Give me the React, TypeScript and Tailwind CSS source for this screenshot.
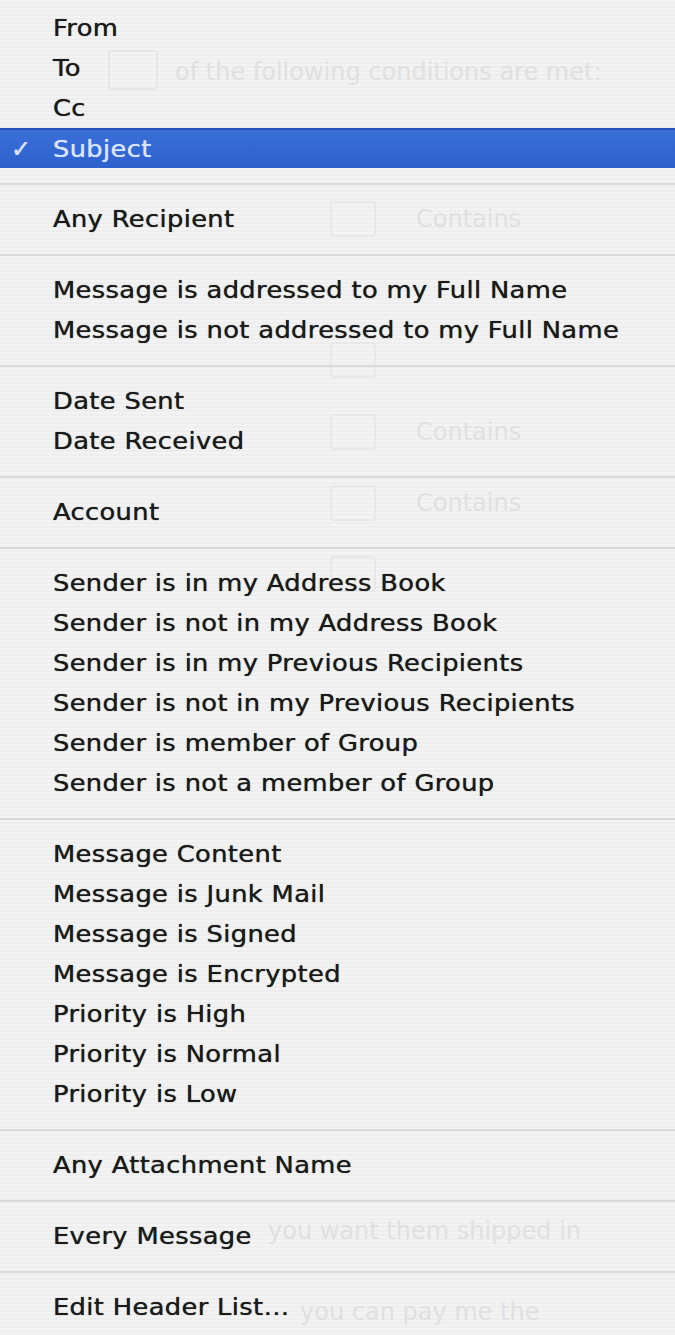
import React from 'react';

type Item = { label: string; checked?: boolean };

// Groups of menu items, separated by a divider
const groups: Item[][] = [
  [{ label: 'From' }, { label: 'To' }, { label: 'Cc' }, { label: 'Subject', checked: true }],
  [{ label: 'Any Recipient' }],
  [{ label: 'Message is addressed to my Full Name' }, { label: 'Message is not addressed to my Full Name' }],
  [{ label: 'Date Sent' }, { label: 'Date Received' }],
  [{ label: 'Account' }],
  [
    { label: 'Sender is in my Address Book' },
    { label: 'Sender is not in my Address Book' },
    { label: 'Sender is in my Previous Recipients' },
    { label: 'Sender is not in my Previous Recipients' },
    { label: 'Sender is member of Group' },
    { label: 'Sender is not a member of Group' },
  ],
  [
    { label: 'Message Content' },
    { label: 'Message is Junk Mail' },
    { label: 'Message is Signed' },
    { label: 'Message is Encrypted' },
    { label: 'Priority is High' },
    { label: 'Priority is Normal' },
    { label: 'Priority is Low' },
  ],
  [{ label: 'Any Attachment Name' }],
  [{ label: 'Every Message' }],
  [{ label: 'Edit Header List…' }],
];

export default function App() {
  return (
    <main
      className="relative w-[675px] h-[1335px] overflow-hidden bg-[#f1f1f1] bg-[repeating-linear-gradient(180deg,#f3f3f3_0px,#f3f3f3_2px,#eeeeee_2px,#eeeeee_4px)]"
      style={{ fontFamily: '"DejaVu Sans", "Lucida Grande", Verdana, sans-serif' }}
    >
      <GhostWindow />

      {/* --- MENU --- */}
      <div className="relative flex flex-col pt-2">
        {groups.map((group, gi) => (
          <div key={gi} className="flex flex-col">
            {gi > 0 && <Divider />}
            {group.map((item) => (
              <MenuRow key={item.label} item={item} />
            ))}
          </div>
        ))}
      </div>
    </main>
  );
}

function MenuRow({ item }: { item: Item }) {
  if (item.checked) {
    return (
      <div className="h-10 flex items-center border-t-2 border-[#2452b8] bg-[linear-gradient(180deg,#3a6fd8_0%,#2d60cc_100%)] text-[#d6e4ff]">
        <span className="w-[53px] pl-[11px] text-[24px] leading-none [text-shadow:0_0_0.7px_#d6e4ff]">✓</span>
        <span className="inline-block origin-left scale-x-[1.12] text-[23px] leading-none tracking-[0.3px] [text-shadow:0_0_0.7px_#d6e4ff]">
          {item.label}
        </span>
      </div>
    );
  }
  return (
    <div className="h-10 flex items-center pl-[53px] whitespace-nowrap">
      <span className="inline-block origin-left scale-x-[1.12] text-[23px] leading-none text-[#1a1a1a] tracking-[0.3px] [text-shadow:0_0_0.8px_#333]">
        {item.label}
      </span>
    </div>
  );
}

function Divider() {
  return (
    <div className="h-[31px] flex items-center">
      <div className="w-full h-[2px] bg-[#dadada]" />
    </div>
  );
}

// --- faint window contents showing through the translucent menu ---
function GhostWindow() {
  return (
    <div className="absolute inset-0 text-[#e0e0e0] text-[24px] select-none pointer-events-none whitespace-nowrap">
      <div className="absolute left-[108px] top-[50px] w-[50px] h-[40px] border-2 border-[#e6e6e6] rounded" />
      <div className="absolute left-[175px] top-[54px]">of the following conditions are met:</div>
      {[219, 432, 503].map((y) => (
        <div key={y} className="absolute left-[330px] flex items-center gap-10" style={{ top: y - 18 }}>
          <span className="w-[46px] h-[36px] border-2 border-[#e8e8e8] rounded" />
          <span>Contains</span>
        </div>
      ))}
      {[360, 574].map((y) => (
        <div key={y} className="absolute left-[330px] w-[46px] h-[36px] border-2 border-[#e8e8e8] rounded" style={{ top: y - 18 }} />
      ))}
      <div className="absolute left-[268px] top-[1213px]">you want them shipped in</div>
      <div className="absolute left-[300px] top-[1294px]">you can pay me the</div>
    </div>
  );
}
